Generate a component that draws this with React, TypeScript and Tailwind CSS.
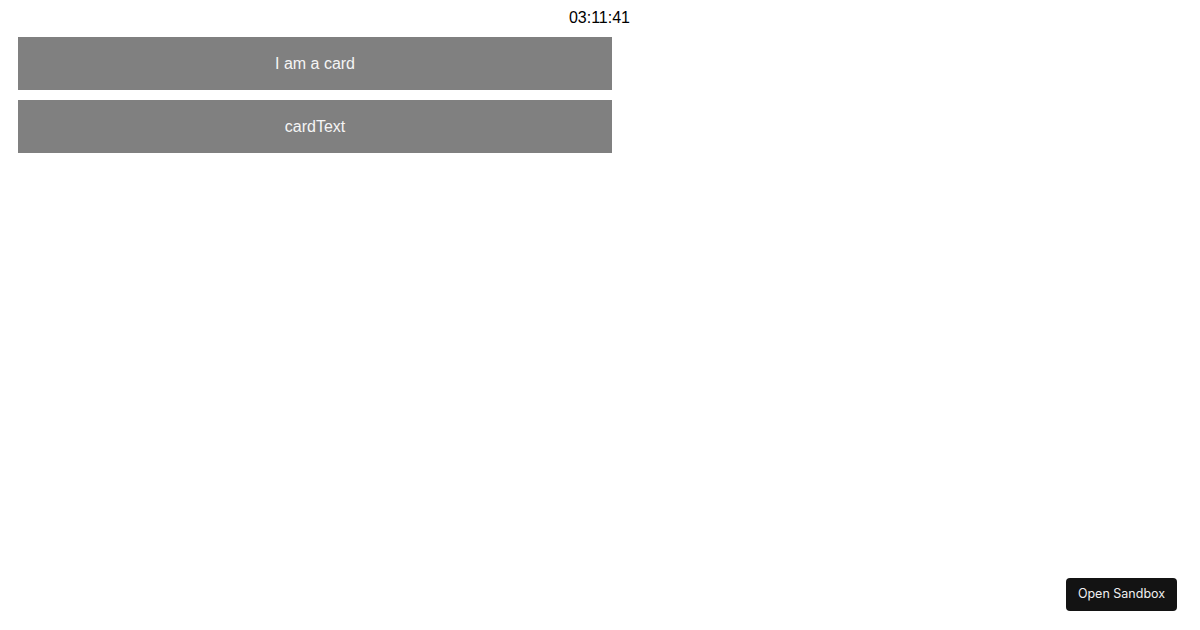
export default function App() {
  const cards = ["I am a card", "cardText"];
  return (
    <div className="min-h-[630px] w-[1200px] bg-white font-['Liberation_Sans',Arial,sans-serif]">
      <div className="flex w-[630px] flex-col pt-[9px]">
        <div className="text-right text-[16px] leading-[18px] text-black">03:11:41</div>
        <div className="mt-[10px] flex flex-col gap-[10px] px-[18px]">
          {cards.map((text) => (
            <div
              key={text}
              className="flex h-[53px] items-center justify-center bg-[#808080] text-[16px] text-[#f5f5f5]"
            >
              {text}
            </div>
          ))}
        </div>
      </div>
      <button className="fixed bottom-[19px] right-[23px] flex h-[33px] w-[111px] items-center justify-center rounded-[4px] bg-[#131313] font-['Inter',sans-serif] text-[12.5px] text-[#f0f0f0]">
        Open Sandbox
      </button>
    </div>
  );
}
